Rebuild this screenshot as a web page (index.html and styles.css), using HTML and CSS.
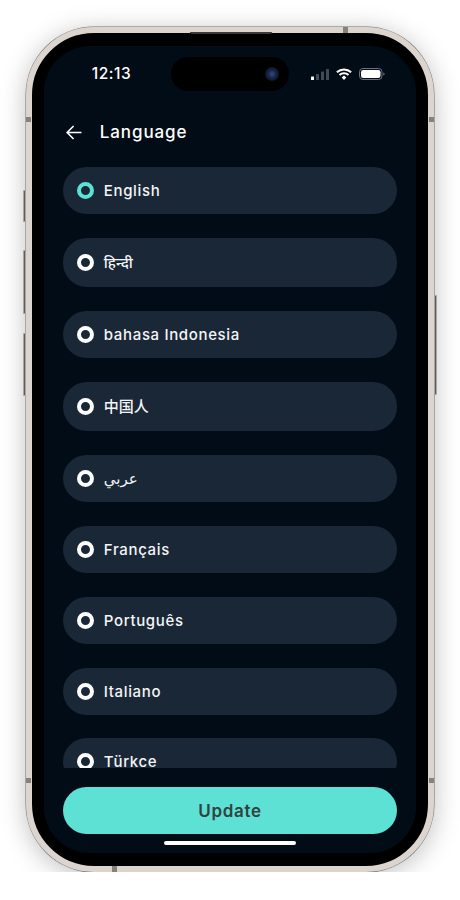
FILE: index.html
```html
<!DOCTYPE html>
<html lang="en">
<head>
  <meta charset="UTF-8" />
  <meta name="viewport" content="width=device-width, initial-scale=1.0"/>
  <title>Language</title>
  <link rel="stylesheet" href="styles.css">
</head>
<body>
  <div class="phone">
    <span class="side-btn side-mute"></span>
    <span class="side-btn side-up"></span>
    <span class="side-btn side-down"></span>
    <span class="side-btn side-power"></span>
    <span class="band band-top"></span>
    <span class="band band-bottom"></span>
    <span class="band band-left-a"></span>
    <span class="band band-left-b"></span>
    <span class="band band-right-a"></span>
    <span class="band band-right-b"></span>
    <span class="speaker"></span>

    <div class="screen">
      <div class="status">
        <span class="time">12:13</span>
        <div class="island"><span class="camera"></span></div>
        <div class="status-icons">
          <svg width="18" height="11" viewBox="0 0 18 11">
            <rect x="0" y="7.5" width="3" height="3.5" rx="0.5" fill="#ffffff"/>
            <rect x="5" y="5" width="3" height="6" rx="0.5" fill="#414b55"/>
            <rect x="10" y="2.5" width="3" height="8.5" rx="0.5" fill="#414b55"/>
            <rect x="15" y="0" width="3" height="11" rx="0.5" fill="#414b55"/>
          </svg>
          <svg width="16" height="12" viewBox="0 0 16 12">
            <path d="M0.9 4.3C5 0.5 11 0.5 15.1 4.3" fill="none" stroke="#ffffff" stroke-width="2.1"/>
            <path d="M3.5 7C6 4.7 10 4.7 12.5 7" fill="none" stroke="#ffffff" stroke-width="2.1"/>
            <path d="M5.7 9.4L8 7.6L10.3 9.4L8 11.9Z" fill="#ffffff"/>
          </svg>
          <svg width="26" height="12" viewBox="0 0 26 12">
            <rect x="0.5" y="0.5" width="22.5" height="11" rx="3.4" fill="none" stroke="#6a737c"/>
            <rect x="2" y="2" width="19.5" height="8" rx="2.2" fill="#ffffff"/>
            <path d="M24.3 4.5C25.2 4.8 25.6 5.3 25.6 6C25.6 6.7 25.2 7.2 24.3 7.5Z" fill="#6a737c"/>
          </svg>
        </div>
      </div>

      <div class="header">
        <svg class="back" width="16" height="15" viewBox="0 0 16 15">
          <path d="M15.5 7.5H1.2M7.6 1L1.1 7.5L7.6 14" fill="none" stroke="#ffffff" stroke-width="1.6"/>
        </svg>
        <h1>Language</h1>
      </div>

      <div class="list">
        <div class="row selected"><span class="radio"></span><span class="label">English</span></div>
        <div class="row tall"><span class="radio"></span><span class="label">हिन्दी</span></div>
        <div class="row"><span class="radio"></span><span class="label">bahasa Indonesia</span></div>
        <div class="row tall"><span class="radio"></span><span class="label">中国人</span></div>
        <div class="row"><span class="radio"></span><span class="label" lang="ar">عربي</span></div>
        <div class="row"><span class="radio"></span><span class="label">Français</span></div>
        <div class="row"><span class="radio"></span><span class="label">Português</span></div>
        <div class="row"><span class="radio"></span><span class="label">Italiano</span></div>
        <div class="row"><span class="radio"></span><span class="label">Türkce</span></div>
      </div>

      <button class="update">Update</button>
      <div class="home-bar"></div>
    </div>
  </div>
</body>
</html>
```

FILE: styles.css
```css
* {
  box-sizing: border-box;
}

body {
  margin: 0;
  background: #ffffff;
  font-family: Inter, "Noto Sans", "Noto Sans CJK SC", "DejaVu Sans", sans-serif;
}

.phone {
  position: relative;
  width: 408.5px;
  height: 845px;
  margin: 27px 0 0 25.8px;
  padding: 13px 12px;
  background: #000000;
  border: 6px solid #dcd5cf;
  border-radius: 68px;
  box-shadow: 0 0 0 0.5px #6f6f6f, 0 4px 26px rgba(0, 0, 0, 0.26);
}

.side-btn {
  position: absolute;
  width: 3px;
  background: #5f5c59;
  border: 1px solid #a9a5a1;
  border-radius: 1px;
}

.side-mute {
  left: -9px;
  top: 157px;
  height: 32px;
}

.side-up {
  left: -9px;
  top: 217px;
  height: 64px;
}

.side-down {
  left: -9px;
  top: 300px;
  height: 63px;
}

.side-power {
  right: -9px;
  top: 262px;
  height: 100px;
}

.band {
  position: absolute;
  background: #85817d;
}

.band-top {
  top: -6px;
  left: 311px;
  width: 5px;
  height: 6px;
}

.band-bottom {
  bottom: -6px;
  left: 80px;
  width: 5px;
  height: 6px;
}

.band-left-a,
.band-left-b {
  left: -6px;
  width: 5px;
  height: 5px;
}

.band-right-a,
.band-right-b {
  right: -6px;
  width: 5px;
  height: 5px;
}

.band-left-a,
.band-right-a {
  top: 84px;
}

.band-left-b,
.band-right-b {
  top: 745px;
}

.speaker {
  position: absolute;
  top: -1px;
  left: 158px;
  width: 82px;
  height: 2px;
  background: #3a3a3a;
  border-radius: 0 0 2px 2px;
}

.screen {
  display: flex;
  flex-direction: column;
  height: 807px;
  background: #020c16;
  border-radius: 46px;
  overflow: hidden;
}

.status {
  display: flex;
  align-items: center;
  height: 34px;
  margin-top: 11px;
  padding-left: 48px;
}

.time {
  width: 39px;
  color: #ffffff;
  font-size: 15.5px;
  font-weight: 500;
  line-height: 20px;
  letter-spacing: 0.5px;
  white-space: nowrap;
}

.island {
  display: flex;
  align-items: center;
  justify-content: flex-end;
  width: 118px;
  height: 34px;
  margin-left: 40px;
  padding-right: 10px;
  background: #000000;
  border-radius: 17px;
}

.camera {
  width: 14px;
  height: 14px;
  border-radius: 50%;
  background: radial-gradient(circle, #2c4c8c 0, #1a2a50 35%, #10141e 70%);
}

.status-icons {
  display: flex;
  align-items: center;
  gap: 7px;
  margin-left: 22px;
}

.header {
  display: flex;
  align-items: center;
  height: 40px;
  margin: 21px 19px 0;
}

.back {
  margin-left: 3px;
}

h1 {
  margin: 0 0 0 18px;
  color: #ffffff;
  font-size: 17px;
  font-weight: 500;
  letter-spacing: 0.9px;
}

.list {
  display: flex;
  flex-direction: column;
  gap: 23.8px;
  height: 601px;
  margin: 15px 19px 0;
  overflow: hidden;
}

.row {
  display: flex;
  flex-shrink: 0;
  align-items: center;
  gap: 10px;
  height: 47px;
  padding-left: 14px;
  background: #1a2737;
  border-radius: 24px;
}

.row.tall {
  height: 49.5px;
}

.radio {
  width: 17px;
  height: 17px;
  border: 4px solid #ffffff;
  border-radius: 50%;
}

.selected .radio {
  border-color: #5ce1d4;
}

.label {
  color: #f4f5f6;
  font-size: 15px;
  font-weight: 500;
  letter-spacing: 0.65px;
}

.tall .label {
  margin-bottom: 2px;
  letter-spacing: 0;
}

.update {
  flex-shrink: 0;
  height: 47px;
  margin: 19px 19px 0;
  background: #5ce1d4;
  border: none;
  border-radius: 24px;
  color: #33423f;
  font-family: inherit;
  font-size: 17px;
  font-weight: 600;
  letter-spacing: 0.7px;
}

.home-bar {
  flex-shrink: 0;
  width: 132px;
  height: 4px;
  margin: 7px auto 0;
  background: #ffffff;
  border-radius: 2px;
}
```
